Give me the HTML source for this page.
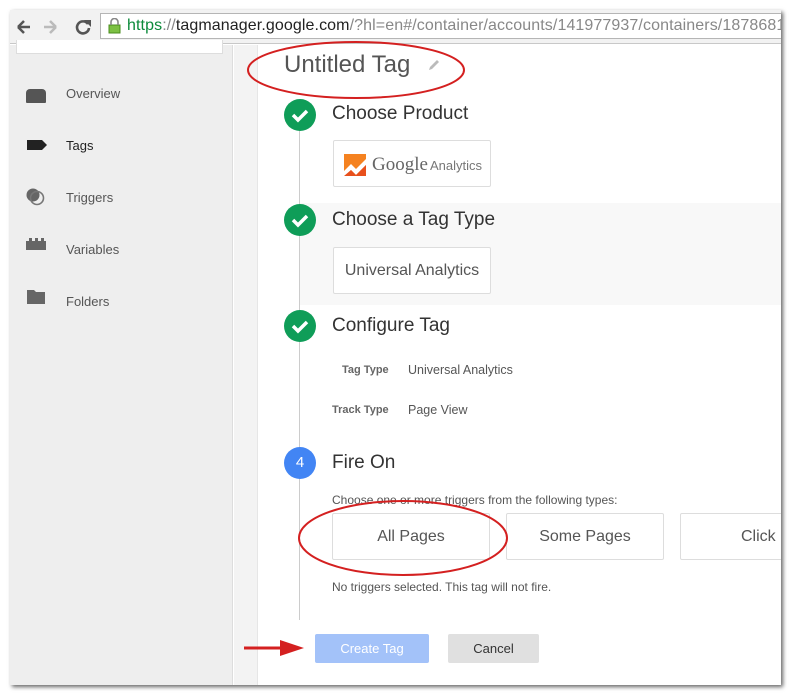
<!DOCTYPE html>
<html><head><meta charset="utf-8"><style>
*{margin:0;padding:0;box-sizing:border-box}
body{width:791px;height:695px;background:#fff;position:relative;overflow:hidden;font-family:"Liberation Sans",sans-serif}
.win{position:absolute;left:10px;top:10px;width:771px;height:675px;background:#fff;box-shadow:2px 2px 4px rgba(0,0,0,.6);overflow:hidden}
.tb{position:absolute;left:0;top:0;width:771px;height:34px;background:#f2f2f2;border-bottom:1px solid #c8c8c8}
.addr{position:absolute;left:90px;top:3px;width:700px;height:26px;background:#fff;border:1px solid #b5b5b5;font-size:16px;line-height:24px;padding-left:26px;color:#222;white-space:nowrap;letter-spacing:0.1px}
.side{position:absolute;left:0;top:35px;width:223px;height:640px;background:#eeeeee;border-right:1px solid #ddd}
.gap{position:absolute;left:224px;top:35px;width:24px;height:640px;background:#f3f3f3;border-right:1px solid #e6e6e6}
.si{position:absolute;left:56px;font-size:13px;color:#555}
.t{position:absolute;font-size:19px;color:#333;white-space:nowrap}
.ck{position:absolute;left:274px;width:32px;height:32px;border-radius:50%;background:#0f9d58}
.box{position:absolute;border:1px solid #ddd;background:#fff;border-radius:2px;text-align:center;color:#555;font-size:16px}
.sm{position:absolute;font-size:12.5px;color:#555;white-space:nowrap}
</style></head><body>
<div class="win">
<div class="tb">
<svg style="position:absolute;left:6px;top:8px" width="80" height="18"><path d="M2 9h12M2 9l6-6M2 9l6 6" stroke="#555" stroke-width="2.5" fill="none"/><path d="M28 9h12M40 9l-6-6M40 9l-6 6" stroke="#bbb" stroke-width="2.5" fill="none"/><path d="M72 6a6 6 0 1 0 1 4" stroke="#555" stroke-width="2.6" fill="none"/><path d="M68 2h7v7z" fill="#555"/></svg>
<div class="addr"><svg style="position:absolute;left:7px;top:4px" width="13" height="16"><rect x="1" y="7" width="11" height="8" fill="#7cc043" stroke="#4a8c1c"/><path d="M3 7V4a3.5 3.5 0 0 1 7 0v3" stroke="#888" stroke-width="1.6" fill="none"/></svg><span style="color:#0b8a3a">https</span><span style="color:#888">://</span>tagmanager.google.com<span style="color:#888">/?hl=en#/container/accounts/141977937/containers/1878681</span></div>
</div>
<div class="side">
<div style="position:absolute;left:6px;top:-5px;width:207px;height:14px;background:#fff;border:1px solid #ddd;border-top:none"></div>
<div style="position:absolute;left:16px;top:44px;width:20px;height:14px;background:#555;border-radius:4px 4px 1px 1px"></div><div class="si" style="top:41px">Overview</div>
<svg style="position:absolute;left:16px;top:94px" width="22" height="12"><path d="M1 1h15l5 5-5 5H1z" fill="#222"/></svg><div class="si" style="top:93px;color:#222">Tags</div>
<svg style="position:absolute;left:15px;top:142px" width="22" height="20"><circle cx="8" cy="8" r="6.5" fill="#666"/><circle cx="12" cy="11" r="6.5" fill="none" stroke="#777" stroke-width="1.6"/></svg><div class="si" style="top:145px">Triggers</div>
<svg style="position:absolute;left:16px;top:193px" width="22" height="12"><path d="M0 3h3V0h3v3h3V0h3v3h3V0h3v3h2v9H0z" fill="#666"/></svg><div class="si" style="top:197px">Variables</div>
<svg style="position:absolute;left:17px;top:244px" width="20" height="15"><path d="M0 1h7l2 2h9v12H0z" fill="#666"/></svg><div class="si" style="top:249px">Folders</div>
</div>
<div class="gap"></div>
<div style="position:absolute;left:290px;top:193px;width:481px;height:102px;background:#f8f8f8"></div>
<div style="position:absolute;left:289px;top:110px;width:1px;height:500px;background:#ccc"></div>
<div class="t" style="left:274px;top:41px;font-size:24px;color:#555">Untitled Tag</div>
<svg style="position:absolute;left:417px;top:48px" width="14" height="14"><path d="M2 12l1-3 7-7 2 2-7 7z" fill="#bbb"/></svg>
<div class="ck" style="top:89px"></div><div class="ck" style="top:194px"></div><div class="ck" style="top:300px"></div>
<svg style="position:absolute;left:274px;top:89px" width="32" height="250"><g stroke="#fff" stroke-width="3.5" fill="none"><path d="M9 16l5 5 9-9"/><path d="M9 121l5 5 9-9"/><path d="M9 227l5 5 9-9"/></g></svg>
<div class="ck" style="top:437px;background:#4285f4;color:#fff;font-size:15px;text-align:center;line-height:32px">4</div>
<div class="t" style="left:322px;top:93px">Choose Product</div>
<div class="box" style="left:323px;top:130px;width:158px;height:47px"><svg style="position:absolute;left:10px;top:13px" width="22" height="22"><rect width="22" height="22" fill="#f58220"/><path d="M0 22V17l7-7 5 5 10-10v6L12 21 7 16 1 22z" fill="#fff"/><path d="M0 22h22V11L12 21 7 16z" fill="#e8501c"/></svg><span style="position:absolute;left:38px;top:13px;font-family:'Liberation Serif',serif;font-size:19px;color:#666">Google</span><span style="position:absolute;left:96px;top:17px;font-size:13px;color:#777">Analytics</span></div>
<div class="t" style="left:322px;top:199px">Choose a Tag Type</div>
<div class="box" style="left:323px;top:237px;width:158px;height:47px;line-height:45px">Universal Analytics</div>
<div class="t" style="left:322px;top:305px">Configure Tag</div>
<div class="sm" style="left:332px;top:354px;font-size:11px;font-weight:bold;color:#666">Tag Type</div><div class="sm" style="left:398px;top:353px">Universal Analytics</div>
<div class="sm" style="left:322px;top:394px;font-size:11px;font-weight:bold;color:#666">Track Type</div><div class="sm" style="left:398px;top:393px">Page View</div>
<div class="t" style="left:322px;top:442px">Fire On</div>
<div class="sm" style="left:322px;top:483px;font-size:12px">Choose one or more triggers from the following types:</div>
<div class="box" style="left:322px;top:503px;width:158px;height:47px;line-height:45px">All Pages</div>
<div class="box" style="left:496px;top:503px;width:158px;height:47px;line-height:45px">Some Pages</div>
<div class="box" style="left:670px;top:503px;width:120px;height:47px;line-height:45px;text-align:left;padding-left:60px">Click</div>
<div class="sm" style="left:322px;top:570px;font-size:12px">No triggers selected. This tag will not fire.</div>
<div style="position:absolute;left:305px;top:624px;width:114px;height:29px;background:#a3c2f9;border-radius:2px;color:#fff;font-size:13px;text-align:center;line-height:29px">Create Tag</div>
<div style="position:absolute;left:438px;top:624px;width:91px;height:29px;background:#e0e0e0;border-radius:2px;color:#333;font-size:13px;text-align:center;line-height:29px">Cancel</div>
</div>
<svg style="position:absolute;left:0;top:0" width="791" height="695"><g fill="none" stroke="#d42020" stroke-width="2"><ellipse cx="356" cy="70" rx="108" ry="28"/><ellipse cx="403" cy="538" rx="104" ry="37"/></g><path d="M244 648h45" stroke="#d42020" stroke-width="3"/><path d="M280 640l24 8-24 8z" fill="#d42020"/></svg>
</body></html>
